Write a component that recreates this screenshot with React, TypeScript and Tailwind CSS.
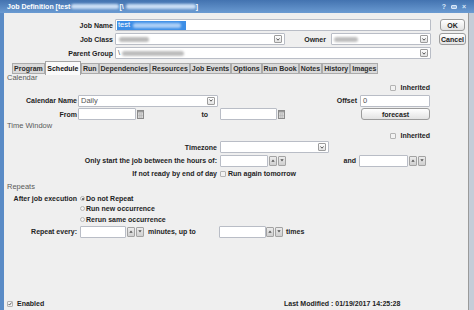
import React from "react";

const font = "font-['Liberation_Sans',Arial,sans-serif]";

function Label({ children, className = "" }: { children: React.ReactNode; className?: string }) {
  return <span className={`text-[7px] font-bold leading-none text-[#1e1e1e] whitespace-nowrap ${className}`}>{children}</span>;
}

function Section({ children }: { children: React.ReactNode }) {
  return <span className="pl-[3px] text-[7.5px] leading-none text-[#5a5a5a]">{children}</span>;
}

function Box({ className = "", children }: { className?: string; children?: React.ReactNode }) {
  return (
    <div className={`flex h-[12px] items-center overflow-hidden rounded-[1px] border border-[#b9bdc6] bg-white ${className}`}>
      {children}
    </div>
  );
}

function DropBtn() {
  return (
    <div className="ml-auto mr-[2px] flex h-[8px] w-[8px] items-center justify-center rounded-[1px] border border-[#9c9c9c] bg-gradient-to-b from-white to-[#e2e2e2]">
      <svg width="4" height="3" viewBox="0 0 4 3">
        <path d="M0.5 0.5 L2 2.2 L3.5 0.5" fill="none" stroke="#444" strokeWidth="0.9" />
      </svg>
    </div>
  );
}

function Spin({ up }: { up?: boolean }) {
  return (
    <div className="flex h-[10px] w-[8px] items-center justify-center rounded-[1px] border border-[#a3a3a3] bg-gradient-to-b from-[#ececec] to-[#cfcfcf]">
      <svg width="4" height="3" viewBox="0 0 4 3">
        {up ? <path d="M0.3 2.7 L2 0.5 L3.7 2.7 Z" fill="#555" /> : <path d="M0.3 0.3 L2 2.5 L3.7 0.3 Z" fill="#555" />}
      </svg>
    </div>
  );
}

function CalIcon() {
  return (
    <svg width="7" height="9" viewBox="0 0 7 9" className="ml-[1px]">
      <rect x="0.5" y="0.5" width="6" height="8" fill="#e8e8e8" stroke="#8a8a8a" />
      <rect x="1" y="1" width="5" height="1.5" fill="#9a9a9a" />
      <path d="M1 4 H6 M1 5.5 H6 M1 7 H6 M2.7 3 V8 M4.3 3 V8" stroke="#a6a6a6" strokeWidth="0.5" />
    </svg>
  );
}

function Check({ checked }: { checked?: boolean }) {
  return (
    <div className="flex h-[6px] w-[6px] items-center justify-center rounded-[1px] border border-[#b3b3b3] bg-[#f2f2f2]">
      {checked && (
        <svg width="6" height="6" viewBox="0 0 6 6">
          <path d="M0.8 3 L2.3 4.6 L5.4 0.8" fill="none" stroke="#333" strokeWidth="1.1" />
        </svg>
      )}
    </div>
  );
}

function Radio({ on }: { on?: boolean }) {
  return (
    <div className="flex h-[5px] w-[5px] items-center justify-center rounded-full border border-[#b5b5b5] bg-[#f3f3f3]">
      {on && <div className="h-[2px] w-[2px] rounded-full bg-[#444]" />}
    </div>
  );
}

function Btn({ children, className = "" }: { children: React.ReactNode; className?: string }) {
  return (
    <div
      className={`flex h-[12px] items-center justify-center rounded-[3px] border border-[#9c9c9c] bg-gradient-to-b from-white to-[#e3e3e3] text-[7px] font-bold leading-none text-[#222] ${className}`}
    >
      {children}
    </div>
  );
}

function Blur({ className }: { className: string }) {
  return <span className={`inline-block h-[5px] rounded-full blur-[1.2px] ${className}`} />;
}

const tabs = ["Program", "Schedule", "Run", "Dependencies", "Resources", "Job Events", "Options", "Run Book", "Notes", "History", "Images"];

export default function App() {
  return (
    <div className={`flex h-[310px] w-[474px] flex-col overflow-hidden bg-[#efefef] ${font}`}>
      {/* title bar */}
      <div className="flex h-[13px] shrink-0 items-center bg-gradient-to-b from-[#4373b0] to-[#6b9bd2] pl-[7px] pr-[8px]">
        <span className="text-[7px] font-bold leading-none text-white">Job Definition [test</span>
        <Blur className="ml-[1px] w-[48px] bg-[#c8dcf4]" />
        <span className="text-[7px] font-bold leading-none text-white">[\</span>
        <Blur className="ml-[2px] w-[70px] bg-[#c8dcf4]" />
        <span className="text-[7px] font-bold leading-none text-white">]</span>
        <div className="ml-auto flex items-center gap-[5px] text-[7px] font-bold leading-none text-[#dbe8f7]">
          <span>?</span>
          <span className="h-[4px] w-[6px] rounded-[1px] border border-[#dbe8f7] bg-[#9cbde3]" />
          <span>×</span>
        </div>
      </div>

      <div className="flex min-h-0 flex-1">
        <div className="w-[4px] shrink-0 bg-[#5a8bc6]" />

        <div className="flex min-w-0 flex-1 flex-col">
          {/* header fields */}
          <div className="flex pt-[5px]">
            <div className="flex w-[427px] flex-col">
              <div className="flex h-[14px] items-center">
                <Label className="w-[109px] text-right">Job Name</Label>
                <Box className="ml-[2px] w-[316px] border-[#7ea7da]">
                  <div className="relative ml-[1px] flex h-[9px] w-[69px] items-center bg-[#3d8ee6]">
                    <span className="pl-[1px] text-[7.5px] leading-none text-white">test</span>
                    <Blur className="ml-[3px] w-[48px] bg-[#a9cdf6]" />
                  </div>
                </Box>
              </div>
              <div className="flex h-[14px] items-center">
                <Label className="w-[109px] text-right">Job Class</Label>
                <Box className="ml-[2px] w-[170px]">
                  <Blur className="ml-[3px] w-[30px] bg-[#b9b9b9]" />
                  <DropBtn />
                </Box>
                <Label className="w-[44px] pr-[3px] text-right">Owner</Label>
                <Box className="ml-[2px] w-[100px]">
                  <Blur className="ml-[2px] w-[24px] bg-[#bdbdbd]" />
                  <DropBtn />
                </Box>
              </div>
              <div className="flex h-[14px] items-center">
                <Label className="w-[109px] text-right">Parent Group</Label>
                <Box className="ml-[2px] w-[316px]">
                  <span className="pl-[2px] text-[7.5px] leading-none text-[#555]">\</span>
                  <Blur className="ml-[2px] w-[62px] bg-[#bdbdbd]" />
                  <DropBtn />
                </Box>
              </div>
            </div>
            <div className="ml-[9px] flex w-[26px] flex-col">
              <div className="flex h-[14px] items-center">
                <Btn className="w-[25px]">OK</Btn>
              </div>
              <div className="flex h-[14px] items-center">
                <Btn className="w-[27px] -ml-[1px]">Cancel</Btn>
              </div>
            </div>
          </div>

          {/* tabs */}
          <div className="mt-[1px] flex h-[13px] items-end pl-[8px]">
            {tabs.map((t) =>
              t === "Schedule" ? (
                <div
                  key={t}
                  className="-mb-[1px] flex h-[14px] items-center border border-b-0 border-[#a5a5a5] bg-[#fafafa] px-[1.5px] text-[7px] font-bold leading-none text-[#111]"
                >
                  {t}
                </div>
              ) : (
                <div
                  key={t}
                  className="flex h-[11px] items-center border border-[#ababab] bg-[#dadada] px-[1px] text-[7px] font-bold leading-none text-[#2c2c2c]"
                >
                  {t}
                </div>
              )
            )}
          </div>

          {/* Schedule tab */}
          <div className="flex h-[7px] items-center">
            <Section>Calendar</Section>
          </div>
          <div className="flex h-[13px] items-center justify-end pr-[38px]">
            <Check />
            <Label className="ml-[4px]">Inherited</Label>
          </div>
          <div className="flex h-[13px] items-center">
            <Label className="w-[73px] text-right">Calendar Name</Label>
            <Box className="ml-[1px] w-[140px]">
              <span className="pl-[2px] text-[7.5px] leading-none text-[#555]">Daily</span>
              <DropBtn />
            </Box>
            <div className="flex-1" />
            <Label>Offset</Label>
            <Box className="ml-[3px] w-[70px]">
              <span className="pl-[2px] text-[7.5px] leading-none text-[#555]">0</span>
            </Box>
            <div className="w-[38px]" />
          </div>
          <div className="flex h-[14px] items-center">
            <Label className="w-[73px] text-right">From</Label>
            <Box className="ml-[1px] w-[58px]" />
            <CalIcon />
            <Label className="w-[76px] pr-[12px] text-right">to</Label>
            <Box className="w-[57px]" />
            <CalIcon />
            <div className="flex-1" />
            <Btn className="w-[69px]">forecast</Btn>
            <div className="w-[38px]" />
          </div>

          <div className="flex h-[10px] items-center">
            <Section>Time Window</Section>
          </div>
          <div className="flex h-[9px] items-center justify-end pr-[38px]">
            <Check />
            <Label className="ml-[4px]">Inherited</Label>
          </div>
          <div className="flex h-[14px] items-center">
            <Label className="w-[213px] text-right">Timezone</Label>
            <Box className="ml-[3px] w-[109px]">
              <DropBtn />
            </Box>
          </div>
          <div className="flex h-[13px] items-center">
            <Label className="w-[213px] text-right">Only start the job between the hours of:</Label>
            <Box className="ml-[3px] w-[48px]" />
            <div className="ml-[1px] flex gap-[1px]">
              <Spin up />
              <Spin />
            </div>
            <Label className="w-[73px] pr-[3px] text-right">and</Label>
            <Box className="w-[49px]" />
            <div className="ml-[1px] flex gap-[1px]">
              <Spin up />
              <Spin />
            </div>
          </div>
          <div className="flex h-[13px] items-center">
            <Label className="w-[213px] text-right">If not ready by end of day</Label>
            <div className="ml-[3px]">
              <Check />
            </div>
            <Label className="ml-[2px]">Run again tomorrow</Label>
          </div>

          <div className="flex h-[14px] items-center">
            <Section>Repeats</Section>
          </div>
          <div className="flex h-[9px] items-center">
            <Label className="w-[73px] text-right">After job execution</Label>
            <div className="ml-[3px]">
              <Radio on />
            </div>
            <Label className="ml-[1px]">Do not Repeat</Label>
          </div>
          <div className="flex h-[11px] items-center pl-[76px]">
            <Radio />
            <Label className="ml-[1px]">Run new occurrence</Label>
          </div>
          <div className="flex h-[11px] items-center pl-[76px]">
            <Radio />
            <Label className="ml-[1px]">Rerun same occurrence</Label>
          </div>
          <div className="flex h-[13px] items-center">
            <Label className="w-[73px] text-right">Repeat every:</Label>
            <Box className="ml-[3px] w-[46px]" />
            <div className="ml-[1px] flex gap-[1px]">
              <Spin up />
              <Spin />
            </div>
            <Label className="w-[75px] pl-[4px]">minutes, up to</Label>
            <Box className="w-[47px]" />
            <div className="flex gap-[1px]">
              <Spin up />
              <Spin />
            </div>
            <Label className="ml-[3px]">times</Label>
          </div>

          <div className="flex-1" />
          <div className="flex h-[13px] items-center">
            <div className="flex w-[280px] items-center pl-[3px]">
              <Check checked />
              <Label className="ml-[4px]">Enabled</Label>
            </div>
            <Label>Last Modified : 01/19/2017 14:25:28</Label>
          </div>
        </div>

        <div className="w-[6px] shrink-0 border-l border-[#9a9a9a] bg-[#c5cdd8]" />
      </div>
    </div>
  );
}
